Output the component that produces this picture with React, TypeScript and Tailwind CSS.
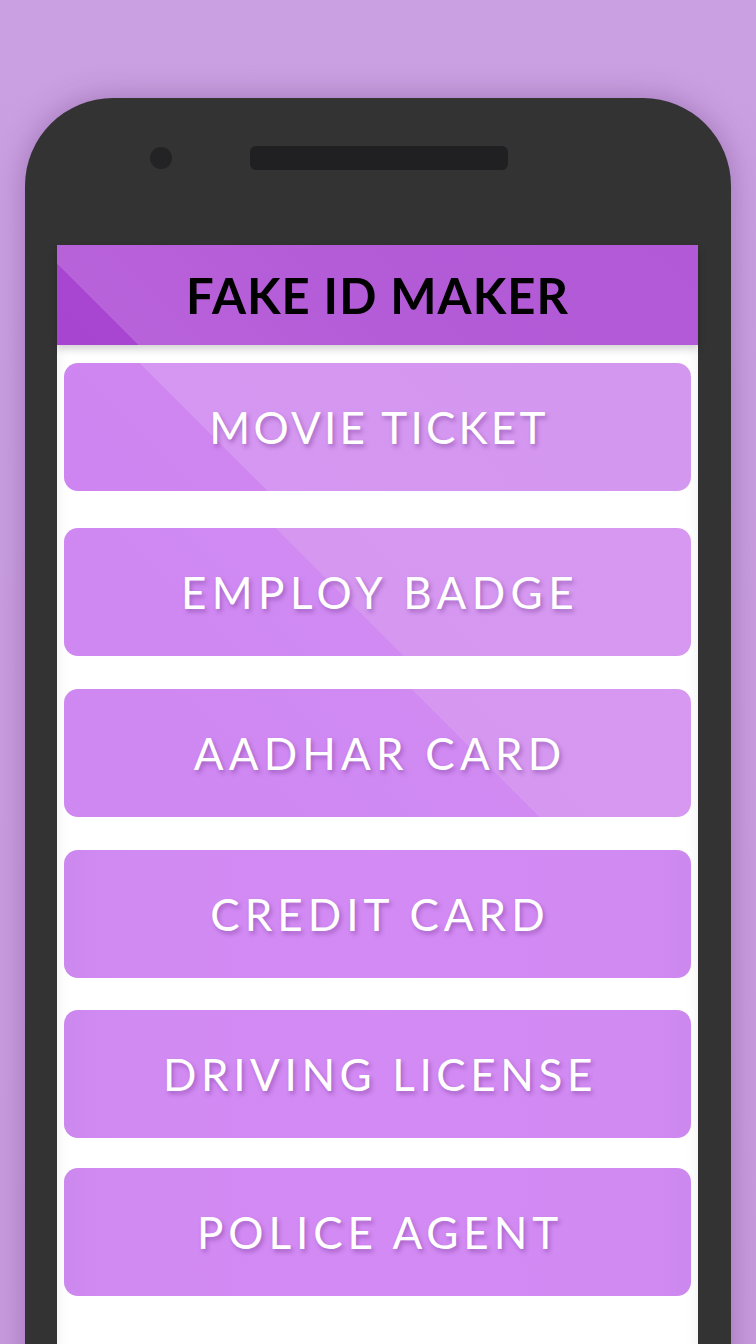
import React from "react";

const items = [
  {
    label: "MOVIE TICKET",
    mt: "mt-[18px]",
    bg: "bg-[linear-gradient(45deg,#cf85f1_0%,#cf86f1_27%,#d597f1_27%,#d497f0_100%)]",
    text: "tracking-[3.2px] pl-[3px]",
  },
  {
    label: "EMPLOY BADGE",
    mt: "mt-[37px]",
    bg: "bg-[linear-gradient(45deg,#cf87f2_0%,#d08af2_45%,#d597f0_45%,#d698f0_100%)]",
    text: "tracking-[5.4px] pl-[5px]",
  },
  {
    label: "AADHAR CARD",
    mt: "mt-[33px]",
    bg: "bg-[linear-gradient(45deg,#cf87f2_0%,#d08af2_63%,#d597f0_63%,#d698f0_100%)]",
    text: "tracking-[5.2px] pl-[5px]",
  },
  {
    label: "CREDIT CARD",
    mt: "mt-[33px]",
    bg: "bg-[linear-gradient(90deg,#cc88ee_0%,#d28af3_8%,#d38af4_50%,#d28af3_92%,#cc88ee_100%)]",
    text: "tracking-[5px] pl-[5px]",
  },
  {
    label: "DRIVING LICENSE",
    mt: "mt-[32px]",
    bg: "bg-[linear-gradient(90deg,#cc88ee_0%,#d28af3_8%,#d38af4_50%,#d28af3_92%,#cc88ee_100%)]",
    text: "tracking-[4.6px] pl-[5px]",
  },
  {
    label: "POLICE AGENT",
    mt: "mt-[30px]",
    bg: "bg-[linear-gradient(90deg,#cc88ee_0%,#d28af3_8%,#d38af4_50%,#d28af3_92%,#cc88ee_100%)]",
    text: "tracking-[4.9px] pl-[5px]",
  },
];

export default function App() {
  return (
    <div className="w-[756px] h-[1344px] overflow-hidden bg-[linear-gradient(180deg,#caa0e2_0%,#c99de0_50%,#c89bde_100%)] pt-[98px] pl-[25px]">
      {/* Phone */}
      <div className="w-[706px] h-[1320px] rounded-t-[88px] bg-[#333333] shadow-[0_0_30px_rgba(80,40,100,0.35)] flex flex-col">
        {/* bezel */}
        <div className="h-[147px] flex items-start pt-[48px] pl-[125px]">
          <div className="mt-[1px] w-[22px] h-[22px] rounded-full bg-[#232325]" />
          <div className="ml-[78px] w-[258px] h-[24px] rounded-[6px] bg-[#202022]" />
        </div>

        {/* Screen */}
        <div className="ml-[32px] w-[641px] flex-1 flex flex-col bg-white shadow-[inset_0_0_14px_rgba(0,0,0,0.07)]">
          <div className="relative z-10 h-[100px] flex items-center justify-center bg-[linear-gradient(45deg,#a744d0_0%,#a946d1_11%,#b862da_11%,#b35ad7_60%,#b159d6_100%)] shadow-[0_4px_8px_rgba(0,0,0,0.18)]">
            <h1 className="font-['Lato',sans-serif] font-bold text-[49px] leading-none text-black tracking-[1px]">
              FAKE ID MAKER
            </h1>
          </div>

          <div className="flex flex-col px-[7px]">
            {items.map((item) => (
              <div
                key={item.label}
                className={`${item.mt} h-[128px] rounded-[14px] ${item.bg} flex items-center justify-center`}
              >
                <span
                  className={`font-['Lato',sans-serif] font-normal text-[44px] leading-none text-white ${item.text} [text-shadow:2px_3px_4px_rgba(110,50,140,0.45)]`}
                >
                  {item.label}
                </span>
              </div>
            ))}
          </div>
        </div>
      </div>
    </div>
  );
}
